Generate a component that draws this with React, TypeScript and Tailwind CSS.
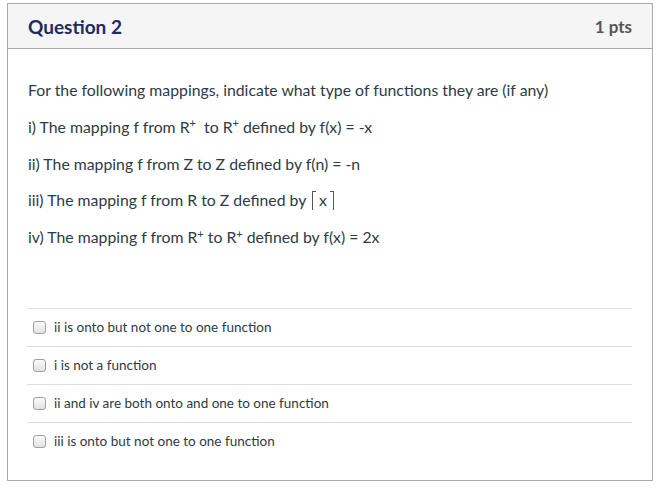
const answers = [
  "ii is onto but not one to one function",
  "i is not a function",
  "ii and iv are both onto and one to one function",
  "iii is onto but not one to one function",
];

function Plus() {
  return <sup className="text-[11px] leading-[0]">+</sup>;
}

function Ceil({ children }: { children: React.ReactNode }) {
  return (
    <span className="ml-[2px]">
      <span className="inline-block w-[4px] h-[19px] border-l border-t border-[#555] align-[-4px]" />
      <span className="px-[3px]">{children}</span>
      <span className="inline-block w-[4px] h-[19px] border-r border-t border-[#555] align-[-4px]" />
    </span>
  );
}

function App() {
  return (
    <div
      className="w-[664px] h-[491px] bg-white pt-[3px] pl-[7px]"
      style={{ fontFamily: "Lato, 'Open Sans', sans-serif" }}
    >
      <div className="w-[646px] h-[478px] border border-[#aaaaaa] flex flex-col">
        <div className="h-[45px] bg-[#f5f5f5] border-b border-[#aaaaaa] flex items-center justify-between px-5">
          <h2 className="text-[19px] font-bold text-[#232a5c] leading-none">Question 2</h2>
          <span className="text-[17px] font-bold text-[#555555] leading-none">1 pts</span>
        </div>
        <div className="px-5 pt-[31px] text-[15.8px] text-[#2d3b45]">
          <div className="flex flex-col gap-[16.75px] leading-[20px]">
            <p>For the following mappings, indicate what type of functions they are (if any)</p>
            <p>
              i) The mapping f from R<Plus />&nbsp; to R<Plus /> defined by f(x) = -x
            </p>
            <p>ii) The mapping f from Z to Z defined by f(n) = -n</p>
            <p>
              iii) The mapping f from R to Z defined by <Ceil>x</Ceil>
            </p>
            <p>
              iv) The mapping f from R<Plus /> to R<Plus /> defined by f(x) = 2x
            </p>
          </div>
          <ul className="mt-[61px] -ml-[1px]">
            {answers.map((a) => (
              <li
                key={a}
                className="h-[38px] border-t border-[#dddddd] flex items-center pl-[6px] gap-[8px] text-[13.5px]"
              >
                <span className="w-[13px] h-[13px] rounded-[3px] border border-[#a0a0a0] bg-gradient-to-b from-[#fafafa] to-[#e2e2e2] shrink-0" />
                <span>{a}</span>
              </li>
            ))}
          </ul>
        </div>
      </div>
    </div>
  );
}

export default App;
